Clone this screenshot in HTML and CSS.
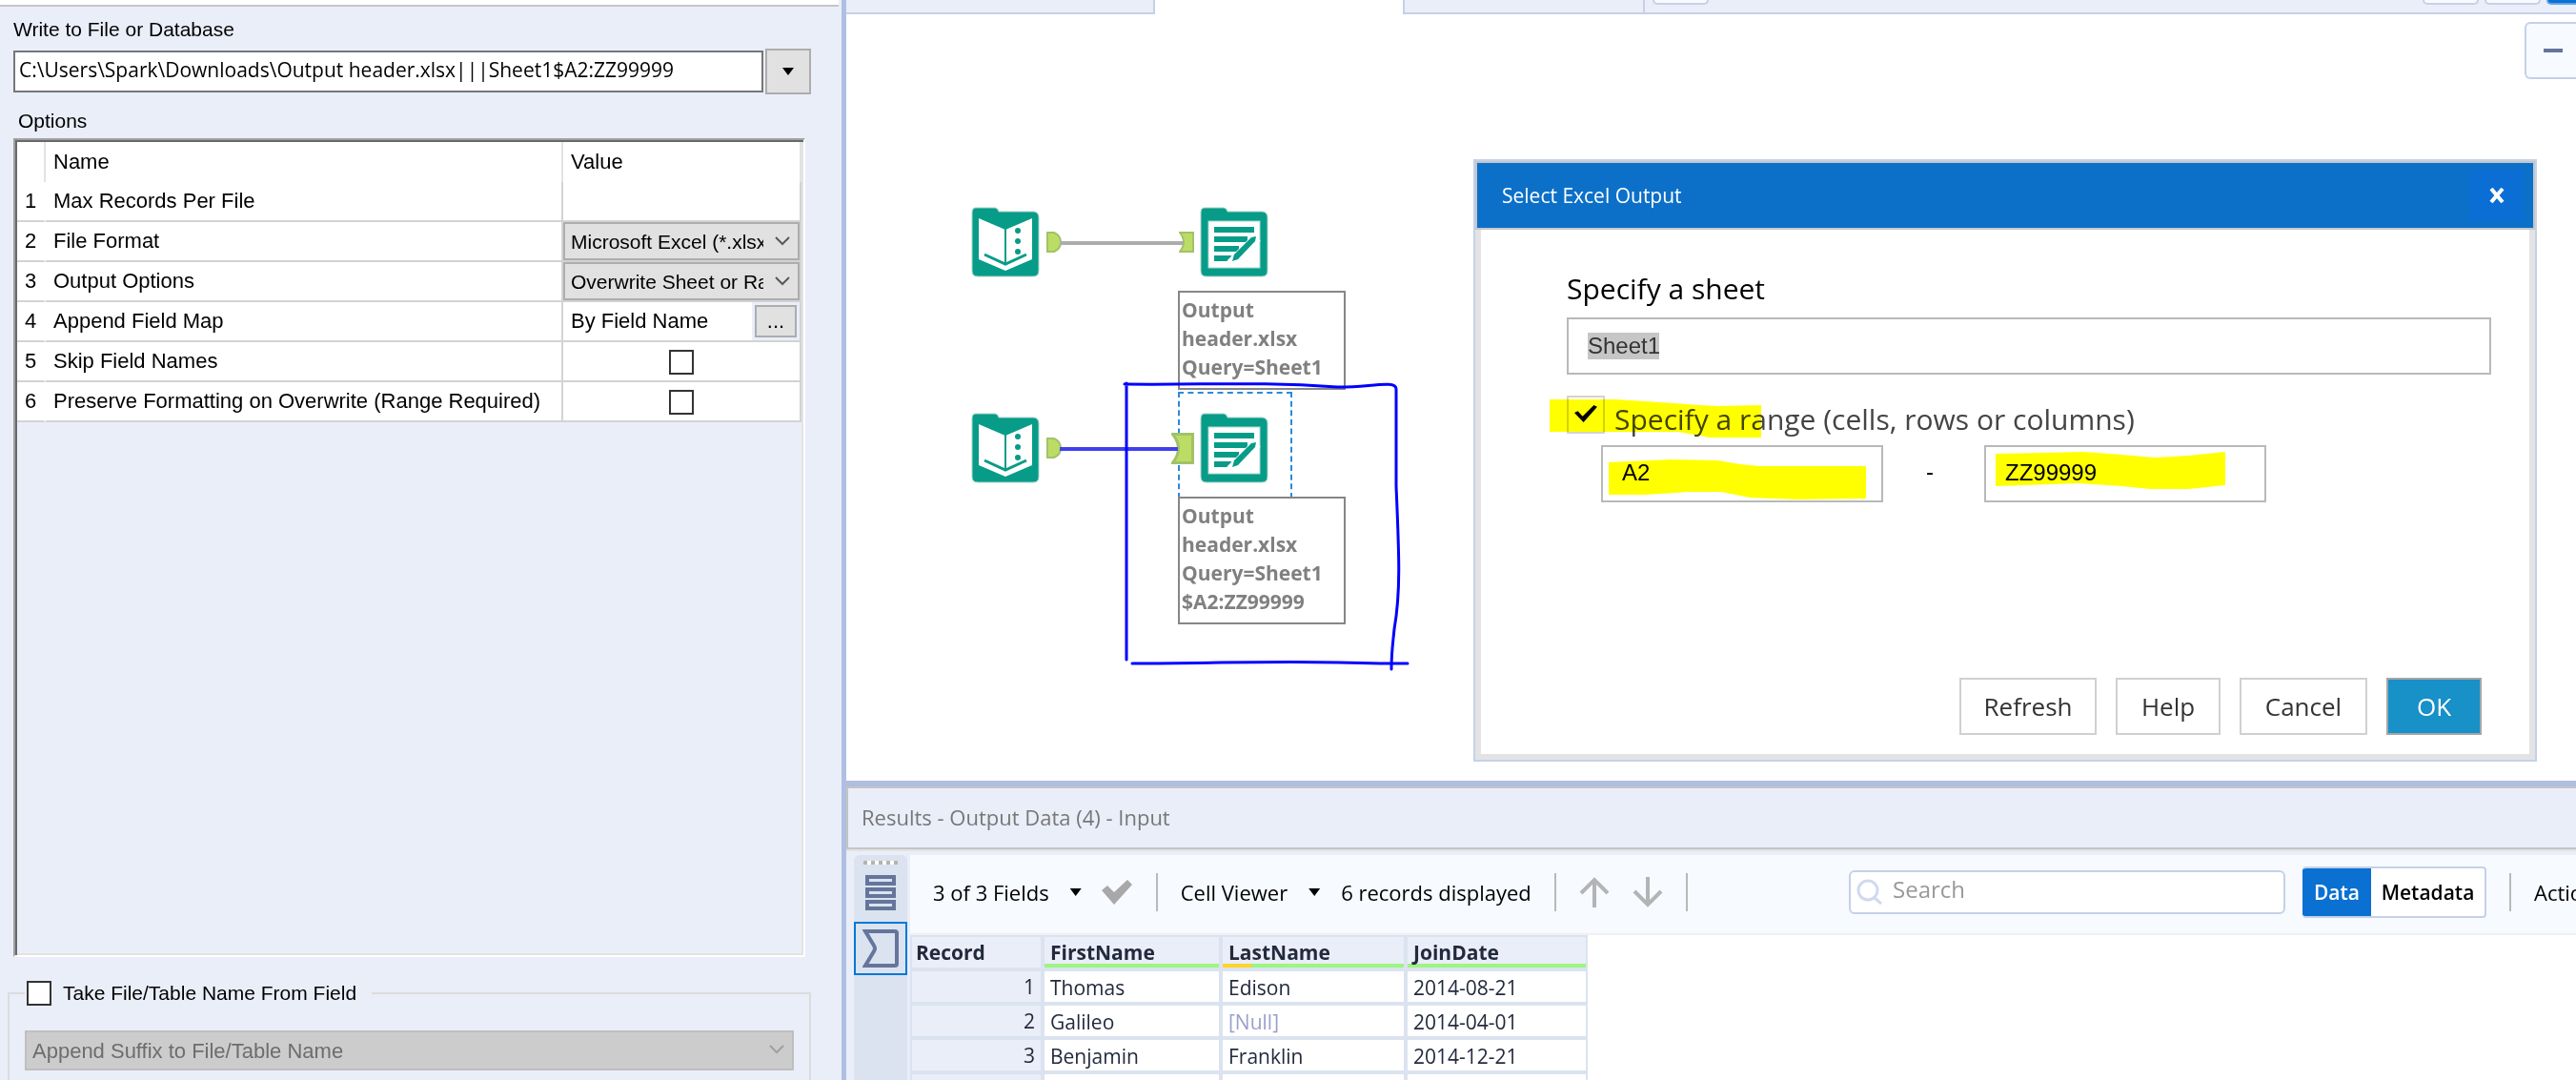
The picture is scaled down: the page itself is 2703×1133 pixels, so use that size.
FILE: index.html
```html
<!DOCTYPE html>
<html lang="en">

<head>
  <meta charset="UTF-8" />
  <meta name="viewport" content="width=device-width, initial-scale=1.0" />
  <title>Output Data</title>
  <link rel="stylesheet" href="styles.css">
</head>

<body>

  <!-- shared icons -->
  <svg class="defs" width="0" height="0">
    <symbol id="input-tool" viewBox="0 0 72 74">
      <path d="M5 1 H25 Q28 1 29 5 H66 Q71 6 71 11 V67 Q71 73 65 73 H7 Q1 73 1 67 V6 Q1 1 5 1 Z" fill="#079c88" stroke="#a9d3cb" />
      <path d="M8 12 L36 24 L64 12 V55 L36 67 L8 55 Z" fill="#fff" />
      <path d="M36 23 V60" stroke="#079c88" stroke-width="2" />
      <path d="M14 50 L36 60 L58 50" fill="none" stroke="#079c88" stroke-width="3" />
      <circle cx="49" cy="25" r="3" fill="#079c88" />
      <circle cx="49" cy="36" r="3" fill="#079c88" />
      <circle cx="49" cy="47" r="3" fill="#079c88" />
    </symbol>
    <symbol id="output-tool" viewBox="0 0 72 74">
      <path d="M5 1 H25 Q28 1 29 5 H66 Q71 6 71 11 V67 Q71 73 65 73 H7 Q1 73 1 67 V6 Q1 1 5 1 Z" fill="#079c88" stroke="#a9d3cb" />
      <rect x="9" y="15" width="54" height="49" fill="#fff" stroke="#a9d9d1" />
      <path d="M15 24 H57 M15 34 H50 M15 44 H41 M15 54 H33" stroke="#079c88" stroke-width="6" />
      <path d="M32 60 L60 32" stroke="#fff" stroke-width="10" />
      <path d="M34 57 L36 50 L54 32 L59 31 L58 36 L40 55 Z" fill="#079c88" />
    </symbol>
    <symbol id="anchor-out" viewBox="0 0 16 22">
      <path d="M1 1 H8 Q15 4 15 11 Q15 18 8 21 H1 Z" fill="#bbdd66" stroke="#a2c268" stroke-width="2" />
    </symbol>
    <symbol id="anchor-in" viewBox="0 0 16 22">
      <path d="M1 1 H15 V21 H1 Q9 11 1 1 Z" fill="#bbdd66" stroke="#a2c268" stroke-width="2" />
    </symbol>
  </svg>

  <div class="app">

    <!-- configuration panel -->
    <aside class="config">
      <div class="config-body">
        <label class="config-label" for="filePath">Write to File or Database</label>
        <div class="path-row">
          <input type="text" class="path-input" id="filePath" value="C:\Users\Spark\Downloads\Output header.xlsx|||Sheet1$A2:ZZ99999">
          <button type="button" class="path-button" aria-label="Browse"><span class="caret"></span></button>
        </div>

        <div class="options-label">Options</div>
        <div class="options">
          <table class="options-table">
            <colgroup>
              <col class="col-num">
              <col>
              <col class="col-value">
            </colgroup>
            <tr class="options-head">
              <th></th>
              <th>Name</th>
              <th>Value</th>
            </tr>
            <tr>
              <td>1</td>
              <td>Max Records Per File</td>
              <td></td>
            </tr>
            <tr>
              <td>2</td>
              <td><label for="fileFormat">File Format</label></td>
              <td class="flush">
                <div class="select">
                  <select id="fileFormat"><option>Microsoft Excel (*.xlsx)</option></select>
                  <svg viewBox="0 0 16 12"><path d="M1 2 L8 9 L15 2" /></svg>
                </div>
              </td>
            </tr>
            <tr>
              <td>3</td>
              <td><label for="outputOptions">Output Options</label></td>
              <td class="flush">
                <div class="select">
                  <select id="outputOptions"><option>Overwrite Sheet or Range</option></select>
                  <svg viewBox="0 0 16 12"><path d="M1 2 L8 9 L15 2" /></svg>
                </div>
              </td>
            </tr>
            <tr>
              <td>4</td>
              <td>Append Field Map</td>
              <td class="flush">
                <div class="field-map">
                  <span>By Field Name</span>
                  <button type="button" aria-label="Edit field map">...</button>
                </div>
              </td>
            </tr>
            <tr>
              <td>5</td>
              <td><label for="skipNames">Skip Field Names</label></td>
              <td class="center"><input type="checkbox" class="check" id="skipNames"></td>
            </tr>
            <tr>
              <td>6</td>
              <td><label for="preserve">Preserve Formatting on Overwrite (Range Required)</label></td>
              <td class="center"><input type="checkbox" class="check" id="preserve"></td>
            </tr>
          </table>
        </div>

        <fieldset class="take-name">
          <legend>
            <input type="checkbox" class="check" id="takeName">
            <label for="takeName">Take File/Table Name From Field</label>
          </legend>
          <div class="select disabled">
            <select disabled aria-label="File name mode"><option>Append Suffix to File/Table Name</option></select>
            <svg viewBox="0 0 16 12"><path d="M1 2 L8 9 L15 2" /></svg>
          </div>
        </fieldset>
      </div>
    </aside>

    <main class="main">

      <!-- workflow canvas -->
      <section class="canvas">
        <div class="tabs">
          <div class="tab"></div>
          <div class="tab tab-active"></div>
          <div class="tab tab-next"></div>
          <div class="tab-tools">
            <button type="button" class="tool" aria-label="New"></button>
            <span class="spacer"></span>
            <button type="button" class="tool" aria-label="List"></button>
            <button type="button" class="tool" aria-label="Schedule"></button>
            <button type="button" class="tool tool-run" aria-label="Run"></button>
          </div>
        </div>

        <button type="button" class="zoom-out" aria-label="Zoom out"><span></span></button>

        <svg class="node input-1"><use href="#input-tool" /></svg>
        <svg class="anchor out-1"><use href="#anchor-out" /></svg>
        <svg class="anchor in-1"><use href="#anchor-in" /></svg>
        <svg class="node output-1"><use href="#output-tool" /></svg>
        <div class="note note-1">Output<br>header.xlsx<br>Query=Sheet1</div>

        <div class="selection"></div>
        <svg class="node input-2"><use href="#input-tool" /></svg>
        <svg class="anchor out-2"><use href="#anchor-out" /></svg>
        <svg class="anchor in-2"><use href="#anchor-in" /></svg>
        <svg class="node output-2"><use href="#output-tool" /></svg>
        <div class="note note-2">Output<br>header.xlsx<br>Query=Sheet1<br>$A2:ZZ99999</div>

        <!-- connections and pen marks -->
        <svg class="wires" width="620" height="720">
          <path d="M224 255 H354" stroke="#acacac" stroke-width="4" />
          <path d="M224 471 H348" stroke="#4040f0" stroke-width="4" />
          <path class="pen" d="M292 403 C380 404 430 400 515 406 C545 407 577 398 577 408 V510 C580 580 582 620 575 660 C573 680 572 685 572 702 M294 402 V692 M300 696 C400 696 460 692 560 696 H589" />
        </svg>

        <!-- Excel output dialog -->
        <div class="dialog">
          <div class="dialog-head">
            <h2>Select Excel Output</h2>
            <button type="button" class="dialog-close" aria-label="Close">
              <svg viewBox="0 0 18 16"><path d="M3 1 L15 15 M15 1 L3 15" /></svg>
            </button>
          </div>
          <div class="dialog-body">
            <label class="sheet-label" for="sheet">Specify a sheet</label>
            <div class="sheet-box"><input type="text" id="sheet" value="Sheet1"></div>
            <div class="range-check">
              <input type="checkbox" id="range" checked>
              <label for="range">Specify a range (cells, rows or columns)</label>
            </div>
            <div class="range-row">
              <input type="text" aria-label="First cell" value="A2">
              <span>-</span>
              <input type="text" aria-label="Last cell" value="ZZ99999">
            </div>
            <div class="dialog-buttons">
              <button type="button" class="refresh">Refresh</button>
              <button type="button" class="help">Help</button>
              <button type="button" class="cancel">Cancel</button>
              <button type="button" class="ok">OK</button>
            </div>
          </div>
          <!-- highlighter strokes -->
          <svg class="marker" width="1116" height="632">
            <path d="M80 250 H149 L196 253 L238 256 L258 257 L302 256 V290 L248 290 L215 284 L148 284 H80 Z" />
            <path d="M142 316 L208 313 L256 314 L280 318 L300 320 L412 320 V354 L340 355 L290 353 L260 347 L226 347 L180 350 L142 350 Z" />
            <path d="M548 307 L600 306 L640 305 L680 308 L715 311 L750 309 L789 305 V340 L750 344 L710 344 L680 341 L635 338 L548 341 Z" />
          </svg>
        </div>
      </section>

      <!-- results window -->
      <section class="results">
        <div class="results-title">Results - Output Data (4) - Input</div>
        <div class="results-body">
          <nav class="side">
            <span class="grip"></span>
            <button type="button" aria-label="Messages">
              <svg width="32" height="38" viewBox="0 0 32 38"><path d="M2 2 H30 V9 H2 Z M2 15 H30 V22 H2 Z M2 28 H30 V35 H2 Z" /></svg>
            </button>
            <button type="button" class="selected" aria-label="Input anchor">
              <svg width="38" height="40" viewBox="0 0 38 40"><path d="M3 2 H34 Q36 2 36 4 V36 Q36 38 34 38 H3 L12 23 Q14 20 12 17 Z" /></svg>
            </button>
          </nav>
          <div class="results-main">
            <div class="toolbar">
              <button type="button" class="fields">3 of 3 Fields <span class="caret"></span></button>
              <button type="button" class="apply" aria-label="Apply">
                <svg width="34" height="28" viewBox="0 0 34 28"><path d="M1 12 L7 7 L14 14 L28 1 L33 6 L14 27 Z" fill="#a8a8a8" /></svg>
              </button>
              <span class="sep"></span>
              <button type="button" class="viewer">Cell Viewer <span class="caret"></span></button>
              <span class="count">6 records displayed</span>
              <span class="sep"></span>
              <div class="arrows">
                <button type="button" aria-label="Previous">
                  <svg width="32" height="32" viewBox="0 0 32 32"><path d="M16 32 V3 M2 17 L16 3 L30 17" /></svg>
                </button>
                <button type="button" aria-label="Next">
                  <svg width="32" height="32" viewBox="0 0 32 32"><path d="M16 0 V29 M2 15 L16 29 L30 15" /></svg>
                </button>
              </div>
              <span class="sep"></span>
              <span class="spacer"></span>
              <div class="search">
                <svg width="28" height="28" viewBox="0 0 28 28"><circle cx="12" cy="12" r="10" /><path d="M19 20 L26 26" /></svg>
                <input type="text" placeholder="Search" aria-label="Search">
              </div>
              <div class="toggle">
                <button type="button" class="active">Data</button>
                <button type="button">Metadata</button>
              </div>
              <span class="sep"></span>
              <button type="button" class="actions">Actions</button>
            </div>
            <table class="records">
              <tr>
                <th>Record</th>
                <th class="ok-bar">FirstName</th>
                <th class="ok-bar null-bar">LastName</th>
                <th class="ok-bar">JoinDate</th>
              </tr>
              <tr>
                <td>1</td>
                <td>Thomas</td>
                <td>Edison</td>
                <td>2014-08-21</td>
              </tr>
              <tr>
                <td>2</td>
                <td>Galileo</td>
                <td class="null">[Null]</td>
                <td>2014-04-01</td>
              </tr>
              <tr>
                <td>3</td>
                <td>Benjamin</td>
                <td>Franklin</td>
                <td>2014-12-21</td>
              </tr>
              <tr>
                <td></td>
                <td></td>
                <td></td>
                <td></td>
              </tr>
            </table>
          </div>
        </div>
      </section>

    </main>
  </div>

</body>

</html>
```
FILE: styles.css
```css
* {
  box-sizing: border-box;
}

body {
  font-family: "Open Sans", sans-serif;
  font-size: 21px;
  color: #000;
  background: #eaeef9;
  margin: 0;
}

button,
input,
select {
  font: inherit;
  color: inherit;
  margin: 0;
  padding: 0;
  border: 0;
  border-radius: 0;
  background: none;
}

.defs {
  position: absolute;
}

.app {
  display: flex;
  height: 100vh;
  overflow: hidden;
}

.spacer {
  flex: 1;
}

.caret {
  width: 12px;
  height: 8px;
  background: #000;
  clip-path: polygon(0 0, 100% 0, 50% 100%);
}

/* configuration panel */

.config {
  flex: 0 0 888px;
  border-right: 5px solid #aebfe1;
  font-family: "Liberation Sans", Arial, sans-serif;
}

.config-body {
  height: 100%;
  width: 880px;
  display: flex;
  flex-direction: column;
  border-top: 5px solid #fff;
  box-shadow: inset 0 2px #c4c6ca;
  padding: 12px 29px 0 14px;
}

.config-label {
  line-height: 28px;
}

.path-row {
  display: flex;
  align-items: center;
  gap: 2px;
  height: 48px;
  margin-top: 6px;
}

.path-input {
  flex: 1;
  height: 44px;
  padding: 0 4px 4px;
  border: 2px solid #767678;
  background: #fff;
  font-family: "Open Sans", sans-serif;
}

.path-button {
  display: flex;
  align-items: center;
  justify-content: center;
  width: 48px;
  height: 48px;
  border: 2px solid #adadad;
  background: #e1e1e1;
}

.options-label {
  padding: 14px 5px 4px;
  line-height: 28px;
}

.options {
  flex: 1;
  margin-right: 6px;
  border: 2px solid;
  border-color: #a0a0a0 #fff #fff #a0a0a0;
  box-shadow: inset 2px 2px #696969, inset -2px -2px #e3e3e3;
  padding: 2px;
}

.options-table {
  width: 100%;
  table-layout: fixed;
  border-collapse: separate;
  border-spacing: 0;
  background: #fff;
  font-size: 22px;
}

.col-num {
  width: 30px;
}

.col-value {
  width: 250px;
}

.options-table th,
.options-table td {
  height: 42px;
  padding: 0 8px;
  border-right: 2px solid #d3d3d3;
  border-bottom: 2px solid #d3d3d3;
  font-weight: normal;
  text-align: left;
  white-space: nowrap;
}

.options-table .options-head th {
  border-bottom: 0;
  border-color: #e3e3e3;
}

.options-table td:first-child {
  border-right-color: #fff;
}

.options-table .flush {
  padding: 0;
}

.options-table .center {
  text-align: center;
}

.select {
  position: relative;
  height: 40px;
  border: 2px solid #adadad;
  background: #e1e1e1;
  font-size: 21px;
}

.select select {
  appearance: none;
  width: calc(100% - 36px);
  height: 100%;
  padding-left: 6px;
  overflow: hidden;
}

.select svg {
  position: absolute;
  right: 8px;
  top: 12px;
  width: 16px;
  height: 12px;
  fill: none;
  stroke: #5a5a5a;
  stroke-width: 2;
}

.check {
  appearance: none;
  width: 26px;
  height: 26px;
  border: 2px solid #333;
  background: #fff;
  vertical-align: middle;
}

.field-map {
  display: flex;
  justify-content: space-between;
  align-items: center;
  height: 40px;
  padding: 0 3px 0 8px;
}

.field-map button {
  width: 44px;
  height: 34px;
  border: 2px solid #adadad;
  box-shadow: 0 0 0 3px #eaeef9;
  background: #e1e1e1;
}

.take-name {
  min-width: 0;
  height: 104px;
  margin: 25px 0 0 -6px;
  padding: 26px 16px 0;
  border: 2px solid #dcdcdc;
  border-bottom: 0;
}

.take-name legend {
  display: flex;
  align-items: center;
  gap: 12px;
  padding: 0 16px 0 2px;
}

.select.disabled {
  height: 42px;
  border-color: #bfbfbf;
  background: #ccc;
  color: #6d6d6d;
  font-size: 22px;
}

.disabled select {
  color: #6d6d6d;
  opacity: 1;
}

.disabled svg {
  stroke: #a0a0a0;
}

/* canvas */

.main {
  flex: 1;
  min-width: 0;
  display: flex;
  flex-direction: column;
}

.canvas {
  position: relative;
  flex: 1;
  overflow: hidden;
  background: #fff;
}

.tabs {
  display: flex;
  height: 15px;
}

.tab,
.tab-tools {
  background: #eaeef9;
  border-bottom: 2px solid #c5d1e8;
}

.tab {
  flex: 0 0 324px;
  border-right: 2px solid #c5d1e8;
}

.tab-active {
  flex-basis: 262px;
  background: #fff;
  border-bottom: 0;
}

.tab-next {
  flex-basis: 252px;
}

.tab-tools {
  flex: 1;
  display: flex;
  gap: 6px;
  padding-left: 8px;
}

.tool {
  flex: 0 0 59px;
  height: 5px;
  background: #f7faff;
  border: 2px solid #c5d1e8;
  border-top: 0;
  border-radius: 0 0 6px 6px;
}

.tool-run {
  flex-basis: 31px;
  background: #0a70d2;
  border-color: #5fa3e6;
  border-right: 0;
  border-radius: 0 0 0 6px;
}

.zoom-out {
  position: absolute;
  top: 23px;
  right: 0;
  width: 54px;
  height: 60px;
  padding-left: 18px;
  border: 2px solid #c5d1e8;
  border-right: 0;
  border-radius: 6px 0 0 6px;
  background: #f7faff;
}

.zoom-out span {
  display: block;
  width: 20px;
  height: 4px;
  background: #65759b;
}

.wires {
  position: absolute;
  left: 0;
  top: 0;
  fill: none;
}

.pen {
  stroke: #00f;
  stroke-width: 3;
  stroke-linecap: round;
}

.node {
  position: absolute;
  width: 72px;
  height: 74px;
}

.anchor {
  position: absolute;
  width: 16px;
  height: 22px;
}

.input-1 {
  left: 131px;
  top: 217px;
}

.output-1 {
  left: 371px;
  top: 217px;
}

.out-1 {
  left: 210px;
  top: 243px;
}

.in-1 {
  left: 349px;
  top: 243px;
}

.input-2 {
  left: 131px;
  top: 433px;
}

.output-2 {
  left: 371px;
  top: 433px;
}

.out-2 {
  left: 210px;
  top: 459px;
}

.in-2 {
  left: 341px;
  top: 454px;
  width: 24px;
  height: 33px;
}

.selection {
  position: absolute;
  left: 348px;
  top: 411px;
  width: 120px;
  height: 112px;
  border: 2px dashed #2a8add;
}

.note {
  position: absolute;
  width: 176px;
  padding: 3px 2px 7px;
  border: 2px solid #868686;
  background: #fff;
  color: #808080;
  font-weight: 700;
  line-height: 30px;
}

.note-1 {
  left: 348px;
  top: 305px;
}

.note-2 {
  left: 348px;
  top: 521px;
}

/* dialog */

.dialog {
  position: absolute;
  top: 167px;
  right: 41px;
  width: 1116px;
  border: 2px solid #c5d1e8;
  background: #fff;
}

.dialog-head {
  display: flex;
  align-items: center;
  justify-content: space-between;
  height: 72px;
  padding: 0 10px 0 26px;
  border: 2px solid #c3c6cb;
  background: #0c70c8;
  color: #fff;
}

.dialog-head h2 {
  margin: 0;
  font-size: 21px;
  font-weight: normal;
}

.dialog-close {
  width: 56px;
  height: 54px;
  background: #0a6ed4;
}

.dialog-close svg {
  width: 18px;
  height: 16px;
  stroke: #fff;
  stroke-width: 4;
}

.dialog-body {
  padding: 42px 40px 20px 90px;
  border: solid #e3e3e3;
  border-width: 0 6px 6px;
}

.sheet-label {
  display: block;
  font-size: 30px;
  line-height: 40px;
}

.sheet-box {
  display: flex;
  align-items: center;
  height: 60px;
  margin-top: 10px;
  padding: 0 20px;
  border: 2px solid #b9b9b9;
}

.sheet-box input {
  width: 75px;
  height: 28px;
  background: #c6c6c6;
  color: #333;
  font-family: "Liberation Sans", Arial, sans-serif;
  font-size: 24px;
}

.range-check {
  display: flex;
  align-items: center;
  gap: 10px;
  height: 40px;
  margin-top: 22px;
  font-size: 30px;
  color: #444;
}

.range-check label {
  padding-top: 8px;
}

.range-check input {
  appearance: none;
  width: 40px;
  height: 40px;
  border: 2px solid #d3d3d3;
  background: #fff;
}

.range-check input::before {
  content: "";
  display: block;
  width: 24px;
  height: 18px;
  margin: 8px 6px;
  background: #000;
  clip-path: polygon(0 45%, 15% 35%, 36% 65%, 85% 0, 100% 10%, 40% 100%);
}

.range-row {
  display: flex;
  align-items: center;
  height: 60px;
  margin: 12px 0 0 36px;
  font-family: "Liberation Sans", Arial, sans-serif;
  font-size: 24px;
}

.range-row input {
  width: 296px;
  height: 60px;
  padding: 0 20px 2px;
  border: 2px solid #b9b9b9;
}

.range-row span {
  width: 106px;
  padding: 0 8px 4px 0;
  text-align: center;
}

.dialog-buttons {
  display: flex;
  justify-content: flex-end;
  gap: 20px;
  margin-top: 184px;
  padding-right: 10px;
}

.dialog-buttons button {
  height: 60px;
  border: 2px solid #d0d0d0;
  background: #fff;
  color: #333;
  font-size: 26px;
}

.dialog-buttons .refresh {
  width: 144px;
}

.dialog-buttons .help {
  width: 110px;
}

.dialog-buttons .cancel {
  width: 134px;
}

.dialog-buttons .ok {
  width: 100px;
  border-color: #a6a6a6;
  background: #1890c8;
  color: #fff;
}

.marker {
  position: absolute;
  left: -2px;
  top: 0;
  fill: #ff0;
  mix-blend-mode: multiply;
  pointer-events: none;
}

/* results */

.results {
  flex: 0 0 314px;
  display: flex;
  flex-direction: column;
  border-top: 6px solid #aebfe1;
  overflow: hidden;
}

.results-title {
  flex: none;
  height: 66px;
  border: 2px solid #c4c4c4;
  border-right: 0;
  outline: 2px solid #e3e3e3;
  padding-left: 14px;
  color: #777;
  font-size: 22px;
  line-height: 60px;
}

.results-body {
  flex: 1;
  display: flex;
  gap: 3px;
  padding: 6px 0 0 8px;
}

.side {
  flex: 0 0 56px;
  display: flex;
  flex-direction: column;
  align-items: center;
  gap: 2px;
  padding-top: 6px;
  border-radius: 6px 6px 0 0;
  background: #dbe3f0;
}

.grip {
  width: 36px;
  height: 4px;
  background: repeating-linear-gradient(90deg, #b4b4b4 0 4px, #fff 4px 8px);
}

.side button {
  width: 56px;
  height: 56px;
  display: flex;
  align-items: center;
  justify-content: center;
}

.side .selected {
  border: 2px solid #0078d7;
}

.side svg {
  fill: none;
  stroke: #65759b;
  stroke-width: 4;
}

.results-main {
  flex: 1;
  min-width: 0;
  background: #fff;
}

.toolbar {
  display: flex;
  align-items: center;
  height: 84px;
  padding: 0 0 4px 24px;
  border-bottom: 2px solid #f0f0f4;
  background: #f7faff;
  white-space: nowrap;
  overflow: hidden;
  font-size: 22px;
}

.fields,
.viewer {
  display: flex;
  align-items: center;
  gap: 22px;
}

.apply {
  display: flex;
  margin-left: 20px;
}

.arrows {
  display: flex;
  gap: 24px;
}

.arrows button {
  display: flex;
}

.arrows svg {
  fill: none;
  stroke: #b4b4b4;
  stroke-width: 4;
}

.sep {
  flex: none;
  width: 2px;
  height: 40px;
  margin: 0 24px;
  background: #b9b9b9;
}

.count {
  margin-left: 22px;
}

.search {
  flex: 0 0 458px;
  display: flex;
  align-items: center;
  gap: 10px;
  height: 46px;
  padding-left: 6px;
  border: 2px solid #c5d1e8;
  border-radius: 6px;
  background: #fff;
}

.search svg {
  fill: none;
  stroke: #d0daee;
  stroke-width: 3;
}

.search input {
  flex: 1;
  height: 100%;
  padding-bottom: 8px;
  font-size: 24px;
}

.search input::placeholder {
  color: #999;
}

.toggle {
  display: flex;
  height: 54px;
  margin-left: 18px;
  border: 2px solid #c5d1e8;
  border-left: 0;
  border-radius: 4px;
  background: #fff;
  overflow: hidden;
  font-size: 21px;
  font-weight: 600;
}

.toggle button {
  width: 119px;
}

.toggle .active {
  width: 72px;
  margin: -2px 0;
  background: #0a70d2;
  color: #fff;
}

.actions {
  flex: 0 0 44px;
  overflow: hidden;
  text-align: left;
}

.records {
  table-layout: fixed;
  width: 711px;
  border-spacing: 0;
  background: #dbe3f0;
  color: #222a3c;
}

.records th,
.records td {
  height: 36px;
  padding: 2px 6px 0;
  border: 2px solid #dbe3f0;
  background: #fff;
  line-height: 28px;
  text-align: left;
}

.records th,
.records td:first-child {
  padding-top: 0;
  background: #eaeef9;
}

.records th:first-child {
  width: 139px;
  padding: 0 4px;
}

.records th:nth-child(2) {
  width: 187px;
}

.records th:nth-child(3) {
  width: 194px;
}

.records td:first-child {
  text-align: right;
}

.records .ok-bar {
  box-shadow: inset 0 -4px #9df582;
}

.records .null-bar {
  background: linear-gradient(#ffd42a, #ffd42a) 0 100% / 30px 4px no-repeat, linear-gradient(#9df582, #9df582) 0 100% / 100% 4px no-repeat, #eaeef9;
  box-shadow: none;
}

.records .null {
  color: #9aa0cc;
}
```
